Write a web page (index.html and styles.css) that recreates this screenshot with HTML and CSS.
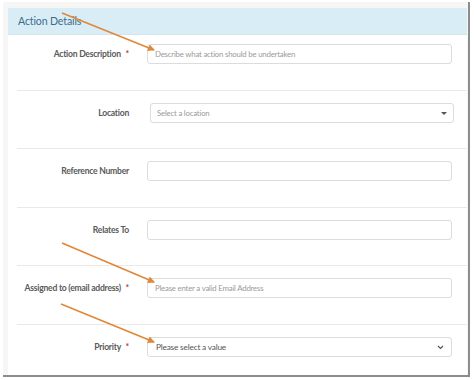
FILE: index.html
```html
<!DOCTYPE html>
<html>
<head>
<meta charset="utf-8">
<link rel="stylesheet" href="styles.css">
</head>
<body>
<div class="frame">
  <div class="panel">
    <div class="panel-heading">Action Details</div>
    <div class="panel-body">
      <div class="row first">
        <label class="lbl">Action Description <span class="req">*</span></label>
        <div class="field"><span class="ph">Describe what action should be undertaken</span></div>
      </div>
      <div class="row">
        <label class="lbl">Location</label>
        <div class="field select2"><span class="ph">Select a location</span><span class="caret"></span></div>
      </div>
      <div class="row">
        <label class="lbl">Reference Number</label>
        <div class="field"></div>
      </div>
      <div class="row">
        <label class="lbl">Relates To</label>
        <div class="field"></div>
      </div>
      <div class="row">
        <label class="lbl">Assigned to (email address) <span class="req">*</span></label>
        <div class="field"><span class="ph">Please enter a valid Email Address</span></div>
      </div>
      <div class="row last">
        <label class="lbl">Priority <span class="req">*</span></label>
        <div class="field sel"><span class="val">Please select a value</span>
          <svg class="chev" width="7" height="5" viewBox="0 0 7 5"><path d="M1 1 L3.5 3.5 L6 1" fill="none" stroke="#555" stroke-width="1.2"/></svg>
        </div>
      </div>
    </div>
  </div>
</div>
<svg class="arrows" width="474" height="380" viewBox="0 0 474 380">
  <defs>
    <marker id="ah" markerWidth="8" markerHeight="8" refX="6" refY="4" orient="auto" markerUnits="userSpaceOnUse">
      <path d="M0 0.5 L7 4 L0 7.5 Z" fill="#e0873a"/>
    </marker>
  </defs>
  <line x1="62" y1="13" x2="154" y2="50" stroke="#e0873a" stroke-width="1.6" marker-end="url(#ah)"/>
  <line x1="62" y1="243" x2="154" y2="282" stroke="#e0873a" stroke-width="1.6" marker-end="url(#ah)"/>
  <line x1="61" y1="304" x2="154" y2="342" stroke="#e0873a" stroke-width="1.6" marker-end="url(#ah)"/>
</svg>
</body>
</html>
```

FILE: styles.css
```css
html, body {
  margin: 0;
  padding: 0;
  background: #ffffff;
  font-family: Lato, "Liberation Sans", sans-serif;
}
.frame {
  position: relative;
  margin: 2px 0 0 3px;
  width: 467px;
  height: 375px;
  background: #f6f6f6;
  border-right: 2px solid #8c8c8c;
  border-bottom: 2px solid #8c8c8c;
  box-sizing: border-box;
  padding: 6px 1px 0 5px;
}
.panel {
  background: #ffffff;
  height: 100%;
}
.panel-heading {
  height: 27px;
  box-sizing: border-box;
  background: #d9edf7;
  border-bottom: 1px solid #cfe6f1;
  color: #3d6e8c;
  font-size: 10.6px;
  letter-spacing: -0.15px;
  line-height: 27px;
  padding-left: 10px;
}
.panel-body {
  padding-left: 9px;
}
.row {
  display: grid;
  grid-template-columns: 112px 305px;
  column-gap: 18px;
  align-items: center;
  padding: 12px 0 25.6px;
  border-top: 1px solid #e9e9e9;
}
.row.first {
  border-top: none;
  padding-top: 9px;
}
.row.last {
  padding-bottom: 0;
}
.lbl {
  text-align: right;
  font-size: 8.6px;
  letter-spacing: -0.25px;
  font-weight: bold;
  color: #5a5a5a;
  white-space: nowrap;
}
.req {
  color: #a94442;
  margin-left: 3px;
}
.field {
  height: 20px;
  box-sizing: border-box;
  border: 1px solid #dcdcdc;
  border-radius: 3px;
  background: #fff;
  display: flex;
  align-items: center;
  padding-left: 7px;
  font-size: 7.8px;
  letter-spacing: -0.2px;
  position: relative;
}
.ph {
  color: #9a9a9a;
}
.select2 {
  margin-left: 3px;
  margin-right: -2px;
  padding-left: 6px;
}
.caret {
  position: absolute;
  right: 6px;
  top: 8px;
  width: 0;
  height: 0;
  border-left: 3px solid transparent;
  border-right: 3px solid transparent;
  border-top: 3px solid #555;
}
.sel {
  padding-left: 8px;
  font-size: 8.3px;
}
.val {
  color: #555;
}
.chev {
  position: absolute;
  right: 7px;
  top: 7px;
}
.arrows {
  position: absolute;
  left: 0;
  top: 0;
  pointer-events: none;
}
```
